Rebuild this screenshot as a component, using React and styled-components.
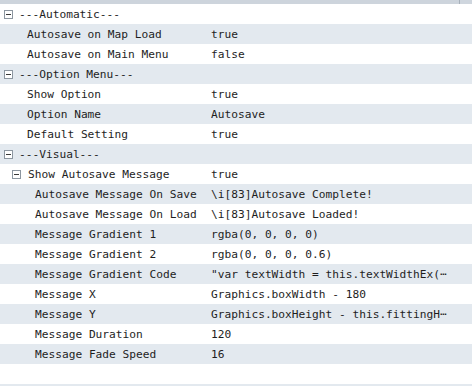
import React from "react";
import styled, { createGlobalStyle } from "styled-components";

const Global = createGlobalStyle`
  html, body { margin: 0; padding: 0; background: #ffffff; }
  body { font-family: "DejaVu Sans Mono", "Liberation Mono", monospace; }
`;

const Grid = styled.div`
  width: 472px;
  height: 386px;
  overflow: hidden;
  background: #ffffff;
  display: flex;
  flex-direction: column;
`;

const HeaderBar = styled.div`
  height: 4px;
  flex: none;
  display: grid;
  grid-template-columns: 460px 1fr;
  background: #cfd6de;
`;

const HeaderCell = styled.div`
  border-right: 1px solid #a7b0ba;
  background: #cdd4dc;
`;

const Row = styled.div`
  height: 20px;
  flex: none;
  display: grid;
  grid-template-columns: 211px 1fr;
  align-items: center;
  background: ${(p) => (p.$odd ? "#e3e9ef" : "#ffffff")};
  color: #1e1e1e;
  font-size: 11.2px;
  white-space: nowrap;
`;

const LabelCell = styled.div`
  display: flex;
  align-items: center;
  padding-left: ${(p) => 4 + p.$level * 8}px;
  overflow: hidden;
`;

const Spacer = styled.span`
  display: inline-block;
  width: 15px;
  flex: none;
`;

const ToggleBox = styled.svg`
  width: 9px;
  height: 9px;
  flex: none;
  margin-right: ${(p) => (p.$level === 0 ? 6 : 7)}px;
`;

const ValueCell = styled.div`
  overflow: hidden;
`;

const Toggle = ({ level }) => (
  <ToggleBox $level={level} viewBox="0 0 9 9">
    <rect x="0.5" y="0.5" width="8" height="8" fill="#ffffff" stroke="#8c96a0" />
    <line x1="2" y1="4.5" x2="7" y2="4.5" stroke="#3a3a3a" strokeWidth="1" />
  </ToggleBox>
);

const rows = [
  { label: "---Automatic---", level: 0, group: true, value: "" },
  { label: "Autosave on Map Load", level: 1, value: "true" },
  { label: "Autosave on Main Menu", level: 1, value: "false" },
  { label: "---Option Menu---", level: 0, group: true, value: "" },
  { label: "Show Option", level: 1, value: "true" },
  { label: "Option Name", level: 1, value: "Autosave" },
  { label: "Default Setting", level: 1, value: "true" },
  { label: "---Visual---", level: 0, group: true, value: "" },
  { label: "Show Autosave Message", level: 1, group: true, value: "true" },
  { label: "Autosave Message On Save", level: 2, value: "\\i[83]Autosave Complete!" },
  { label: "Autosave Message On Load", level: 2, value: "\\i[83]Autosave Loaded!" },
  { label: "Message Gradient 1", level: 2, value: "rgba(0, 0, 0, 0)" },
  { label: "Message Gradient 2", level: 2, value: "rgba(0, 0, 0, 0.6)" },
  { label: "Message Gradient Code", level: 2, value: "\"var textWidth = this.textWidthEx(\u22EF" },
  { label: "Message X", level: 2, value: "Graphics.boxWidth - 180" },
  { label: "Message Y", level: 2, value: "Graphics.boxHeight - this.fittingH\u22EF" },
  { label: "Message Duration", level: 2, value: "120" },
  { label: "Message Fade Speed", level: 2, value: "16" },
  { label: "", level: 0, value: "" },
  { label: "", level: 0, value: "" },
];

export default function App() {
  return (
    <>
      <Global />
      <Grid>
        <HeaderBar>
          <HeaderCell />
          <div />
        </HeaderBar>
        {rows.map((r, i) => (
          <Row key={i} $odd={i % 2 === 1}>
            <LabelCell $level={r.group ? r.level : Math.max(r.level - 1, 0) + (r.level > 0 ? 1 : 0)}>
              {r.label === "" ? null : r.group ? <Toggle level={r.level} /> : <Spacer />}
              {r.label}
            </LabelCell>
            <ValueCell>{r.value}</ValueCell>
          </Row>
        ))}
      </Grid>
    </>
  );
}
